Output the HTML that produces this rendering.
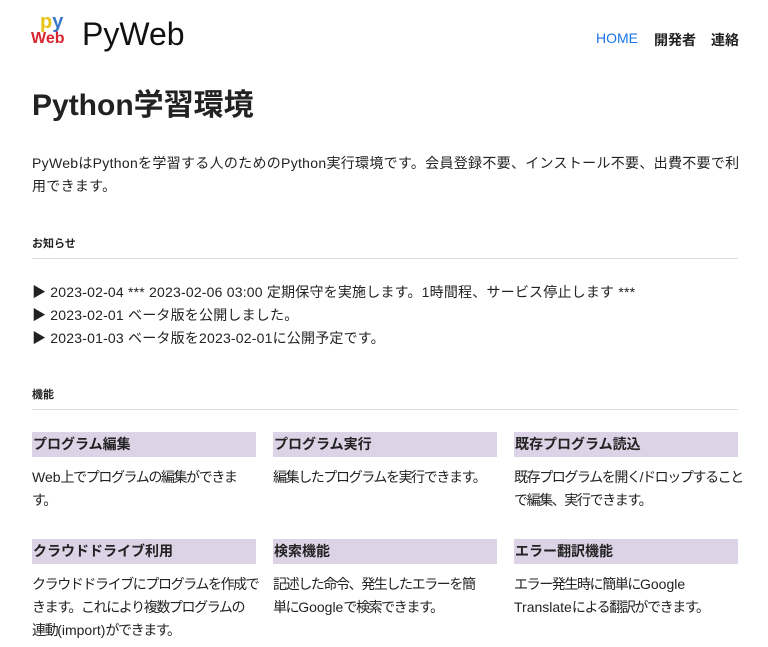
<!DOCTYPE html>
<html><head><meta charset="utf-8"><style>
*{margin:0;padding:0;box-sizing:border-box}
body{width:768px;height:647px;overflow:hidden;background:#fff;color:#222;font-family:"Liberation Sans","Noto Sans CJK JP",sans-serif;position:relative}
.a{position:absolute}
.logo{left:31px;top:14px;width:40px;font-weight:bold}
.nav{top:30px;font-size:14px;font-weight:bold}
h1{position:absolute;left:32px;top:86px;font-size:30px;font-weight:bold;line-height:40px}
.p{left:32px;top:152px;font-size:14px;line-height:23px;white-space:nowrap;letter-spacing:.3px}
.sec{left:32px;font-size:11px;font-weight:bold}
.hr{left:32px;width:706px;height:1px;background:#ddd}
.news{left:32px;top:281px;font-size:14px;line-height:23px;letter-spacing:.2px}
.fh{width:224px;height:25px;background:#dcd3e6;font-size:14px;font-weight:bold;line-height:25px;padding-left:1px}
.ft{font-size:14px;line-height:23px;white-space:nowrap;letter-spacing:-1.4px}
.ft i{font-style:normal;letter-spacing:0}
</style></head><body>
<div class="a logo"><div style="padding-left:9px;font-size:20px;line-height:16px"><span style="color:#e8c31c">p</span><span style="color:#3a79c8">y</span></div><div style="color:#d8262f;font-size:16px;line-height:18px">Web</div></div>
<div class="a" style="left:82px;top:14px;font-size:32px;line-height:40px;color:#111">PyWeb</div>
<div class="a nav" style="left:596px;color:#1a73e8;font-weight:normal">HOME</div>
<div class="a nav" style="left:654px">開発者</div>
<div class="a nav" style="left:711px">連絡</div>
<h1>Python学習環境</h1>
<div class="a p">PyWebはPythonを学習する人のためのPython実行環境です。会員登録不要、インストール不要、出費不要で利<br>用できます。</div>
<div class="a sec" style="top:235px">お知らせ</div>
<div class="a hr" style="top:258px"></div>
<div class="a news">▶ 2023-02-04 *** 2023-02-06 03:00 定期保守を実施します。1時間程、サービス停止します ***<br>▶ 2023-02-01 ベータ版を公開しました。<br>▶ 2023-01-03 ベータ版を2023-02-01に公開予定です。</div>
<div class="a sec" style="top:386px">機能</div>
<div class="a hr" style="top:409px"></div>
<div class="a fh" style="left:32px;top:432px">プログラム編集</div>
<div class="a fh" style="left:273px;top:432px">プログラム実行</div>
<div class="a fh" style="left:514px;top:432px">既存プログラム読込</div>
<div class="a ft" style="left:32px;top:466px"><i>Web</i>上でプログラムの編集ができま<br>す。</div>
<div class="a ft" style="left:273px;top:466px">編集したプログラムを実行できます。</div>
<div class="a ft" style="left:514px;top:466px">既存プログラムを開く/ドロップすること<br>で編集、実行できます。</div>
<div class="a fh" style="left:32px;top:539px">クラウドドライブ利用</div>
<div class="a fh" style="left:273px;top:539px">検索機能</div>
<div class="a fh" style="left:514px;top:539px">エラー翻訳機能</div>
<div class="a ft" style="left:32px;top:573px">クラウドドライブにプログラムを作成で<br>きます。これにより複数プログラムの<br>連動<i>(import)</i>ができます。</div>
<div class="a ft" style="left:273px;top:573px">記述した命令、発生したエラーを簡<br>単に<i>Google</i>で検索できます。</div>
<div class="a ft" style="left:514px;top:573px">エラー発生時に簡単に<i>Google</i><br><i>Translate</i>による翻訳ができます。</div>
</body></html>
